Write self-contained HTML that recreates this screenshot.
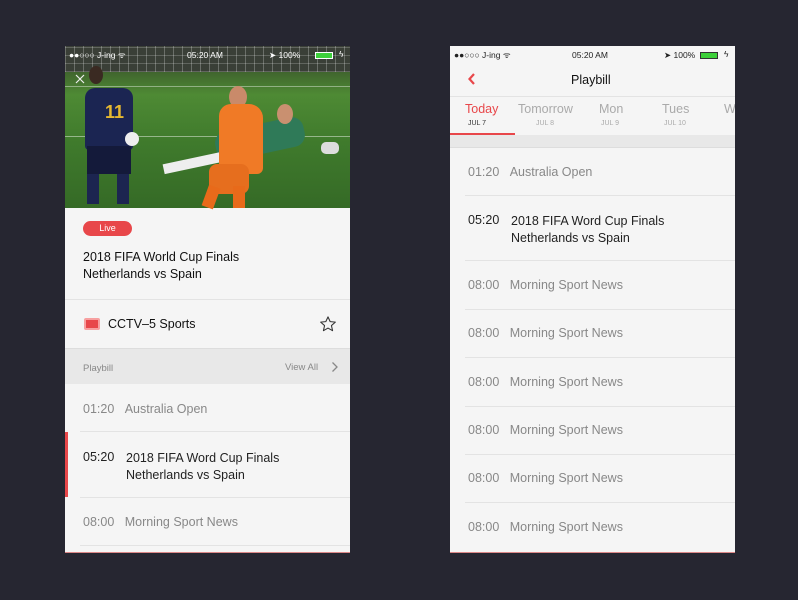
<!DOCTYPE html>
<html><head><meta charset="utf-8"><style>
*{margin:0;padding:0;box-sizing:border-box}
body{width:798px;height:600px;background:#262631;font-family:"Liberation Sans",sans-serif;position:relative;overflow:hidden}
.p{position:absolute;background:#f5f5f5;overflow:hidden}
.a{position:absolute;white-space:nowrap}
.sb{font-size:8.5px;color:#222}
.hr{position:absolute;height:1px;background:#e3e3e3}
.t{font-size:12.5px;color:#888}
.d{font-size:12.5px;color:#222}
</style></head><body>

<!-- LEFT PANEL -->
<div class="p" style="left:65px;top:46px;width:285px;height:507px;border-bottom:1px solid #d88">
  <div class="a" style="left:0;top:0;width:285px;height:162px;background:linear-gradient(180deg,#2d3a2a 0,#3c5a2c 12%,#4e8a34 30%,#3f7a2c 60%,#356a26 100%)"></div>
  <div class="a" style="left:0;top:0;width:285px;height:26px;background:repeating-linear-gradient(90deg,rgba(255,255,255,.25) 0 1px,transparent 1px 9px),repeating-linear-gradient(0deg,rgba(255,255,255,.2) 0 1px,transparent 1px 8px),#3a3f37"></div>
  <div class="a" style="left:0;top:40px;width:285px;height:1px;background:rgba(255,255,255,.4)"></div>
  <div class="a" style="left:0;top:90px;width:285px;height:1px;background:rgba(255,255,255,.45)"></div>
  <div class="a" style="left:24px;top:20px;width:14px;height:18px;border-radius:50%;background:#3a2a22"></div>
  <div class="a" style="left:20px;top:42px;width:48px;height:62px;border-radius:10px 10px 4px 4px;background:#1b2552"></div>
  <div class="a" style="left:40px;top:56px;width:10px;height:18px;color:#e6b830;font-size:18px;font-weight:bold">11</div>
  <div class="a" style="left:22px;top:100px;width:44px;height:28px;background:#141a3a"></div>
  <div class="a" style="left:22px;top:128px;width:12px;height:30px;background:#1c2550"></div>
  <div class="a" style="left:52px;top:128px;width:12px;height:30px;background:#1c2550"></div>
  <div class="a" style="left:60px;top:86px;width:14px;height:14px;border-radius:50%;background:#eee"></div>
  <div class="a" style="left:150px;top:78px;width:90px;height:30px;border-radius:12px;background:#2f7a58;transform:rotate(-12deg)"></div>
  <div class="a" style="left:212px;top:58px;width:16px;height:20px;border-radius:50%;background:#c99070"></div>
  <div class="a" style="left:98px;top:112px;width:60px;height:10px;background:#eee;transform:rotate(-12deg)"></div>
  <div class="a" style="left:256px;top:96px;width:18px;height:12px;border-radius:5px;background:#ddd"></div>
  <div class="a" style="left:164px;top:40px;width:18px;height:22px;border-radius:50%;background:#c98a6a"></div>
  <div class="a" style="left:154px;top:58px;width:44px;height:70px;border-radius:12px 14px 6px 6px;background:#f07a26"></div>
  <div class="a" style="left:144px;top:118px;width:40px;height:30px;border-radius:8px;background:#e66e1e"></div>
  <div class="a" style="left:140px;top:140px;width:12px;height:22px;background:#e86a1a;transform:rotate(20deg)"></div>
  <div class="a" style="left:168px;top:140px;width:12px;height:22px;background:#e86a1a"></div>
  <div class="a sb" style="left:4px;top:4px;color:#fff">●●○○○ J-ing ᯤ</div>
  <div class="a sb" style="left:122px;top:4px;color:#fff">05:20 AM</div>
  <div class="a sb" style="left:204px;top:4px;color:#fff">➤ 100%</div>
  <div class="a" style="left:250px;top:6px;width:18px;height:7px;background:#3dd03a;border:1px solid #fff"></div>
  <div class="a sb" style="left:274px;top:3px;color:#fff">ϟ</div>
  <svg class="a" style="left:10px;top:28px" width="10" height="10"><path d="M1 1L9 9M9 1L1 9" stroke="#eee" stroke-width="1.2"/></svg>

  <div class="a" style="left:18px;top:175px;width:49px;height:15px;border-radius:8px;background:#e8474a;color:#fff;font-size:9px;text-align:center;line-height:15px">Live</div>
  <div class="a" style="left:18px;top:203px;font-size:12.5px;color:#111;line-height:17px">2018 FIFA World Cup Finals<br>Netherlands vs Spain</div>
  <div class="hr" style="left:0;top:253px;width:285px"></div>
  <div class="a" style="left:19px;top:272px;width:16px;height:12px;background:#e8474a;border:2px solid #f7a0a0;border-radius:2px"></div>
  <div class="a" style="left:43px;top:271px;font-size:12.5px;color:#111">CCTV–5 Sports</div>
  <svg class="a" style="left:254px;top:269px" width="18" height="18" viewBox="0 0 24 24"><path d="M12 2.5l2.9 6.3 6.9.7-5.2 4.6 1.5 6.8L12 17.4l-6.1 3.5 1.5-6.8L2.2 9.5l6.9-.7z" fill="none" stroke="#333" stroke-width="1.4" stroke-linejoin="round"/></svg>
  <div class="a" style="left:0;top:302px;width:285px;height:36px;background:#e8e8e8;border-top:1px solid #ddd"></div>
  <div class="a" style="left:18px;top:317px;font-size:9.5px;color:#888">Playbill</div>
  <div class="a" style="left:220px;top:316px;font-size:9.5px;color:#888">View All</div>
  <svg class="a" style="left:266px;top:315px" width="8" height="12"><path d="M1.5 1.5L6 6l-4.5 4.5" fill="none" stroke="#888" stroke-width="1.3"/></svg>
  <div class="a t" style="left:18px;top:356px">01:20&nbsp;&nbsp;&nbsp;Australia Open</div>
  <div class="hr" style="left:15px;top:385px;width:270px"></div>
  <div class="a" style="left:0;top:386px;width:3px;height:65px;background:#e8474a"></div>
  <div class="a d" style="left:18px;top:404px">05:20</div>
  <div class="a d" style="left:61px;top:404px;line-height:17px">2018 FIFA Word Cup Finals<br>Netherlands vs Spain</div>
  <div class="hr" style="left:15px;top:451px;width:270px"></div>
  <div class="a t" style="left:18px;top:469px">08:00&nbsp;&nbsp;&nbsp;Morning Sport News</div>
  <div class="hr" style="left:15px;top:499px;width:270px"></div>
</div>

<!-- RIGHT PANEL -->
<div class="p" style="left:450px;top:46px;width:285px;height:507px;border-bottom:1px solid #d88">
  <div class="a sb" style="left:4px;top:4px">●●○○○ J-ing ᯤ</div>
  <div class="a sb" style="left:122px;top:4px">05:20 AM</div>
  <div class="a sb" style="left:214px;top:4px">➤ 100%</div>
  <div class="a" style="left:250px;top:6px;width:18px;height:7px;background:#3dd03a;border:1px solid #333"></div>
  <div class="a sb" style="left:274px;top:3px">ϟ</div>
  <svg class="a" style="left:17px;top:26px" width="10" height="14"><path d="M7 2L2.5 7 7 12" fill="none" stroke="#e8474a" stroke-width="2.2"/></svg>
  <div class="a" style="left:121px;top:27px;font-size:12.5px;color:#111">Playbill</div>
  <div class="hr" style="left:0;top:50px;width:285px"></div>
  <div class="a" style="left:15px;top:56px;font-size:12.5px;color:#e8474a">Today</div>
  <div class="a" style="left:18px;top:74px;font-size:7px;color:#333">JUL 7</div>
  <div class="a" style="left:68px;top:56px;font-size:12.5px;color:#aaa">Tomorrow</div>
  <div class="a" style="left:86px;top:74px;font-size:7px;color:#aaa">JUL 8</div>
  <div class="a" style="left:149px;top:56px;font-size:12.5px;color:#aaa">Mon</div>
  <div class="a" style="left:151px;top:74px;font-size:7px;color:#aaa">JUL 9</div>
  <div class="a" style="left:212px;top:56px;font-size:12.5px;color:#aaa">Tues</div>
  <div class="a" style="left:214px;top:74px;font-size:7px;color:#aaa">JUL 10</div>
  <div class="a" style="left:274px;top:56px;font-size:12.5px;color:#aaa">W</div>
  <div class="a" style="left:0;top:87px;width:65px;height:2px;background:#e8474a"></div>
  <div class="a" style="left:0;top:89px;width:285px;height:13px;background:#e8e8e8;border-bottom:1px solid #ddd"></div>
  <div class="a t" style="left:18px;top:119px">01:20&nbsp;&nbsp;&nbsp;Australia Open</div>
  <div class="hr" style="left:15px;top:149px;width:270px"></div>
  <div class="a d" style="left:18px;top:167px">05:20</div>
  <div class="a d" style="left:61px;top:167px;line-height:17px">2018 FIFA Word Cup Finals<br>Netherlands vs Spain</div>
  <div class="hr" style="left:15px;top:214px;width:270px"></div>
  <div class="a t" style="left:18px;top:232px">08:00&nbsp;&nbsp;&nbsp;Morning Sport News</div>
  <div class="hr" style="left:15px;top:263px;width:270px"></div>
  <div class="a t" style="left:18px;top:280px">08:00&nbsp;&nbsp;&nbsp;Morning Sport News</div>
  <div class="hr" style="left:15px;top:311px;width:270px"></div>
  <div class="a t" style="left:18px;top:329px">08:00&nbsp;&nbsp;&nbsp;Morning Sport News</div>
  <div class="hr" style="left:15px;top:360px;width:270px"></div>
  <div class="a t" style="left:18px;top:377px">08:00&nbsp;&nbsp;&nbsp;Morning Sport News</div>
  <div class="hr" style="left:15px;top:408px;width:270px"></div>
  <div class="a t" style="left:18px;top:425px">08:00&nbsp;&nbsp;&nbsp;Morning Sport News</div>
  <div class="hr" style="left:15px;top:456px;width:270px"></div>
  <div class="a t" style="left:18px;top:474px">08:00&nbsp;&nbsp;&nbsp;Morning Sport News</div>
</div>
</body></html>
